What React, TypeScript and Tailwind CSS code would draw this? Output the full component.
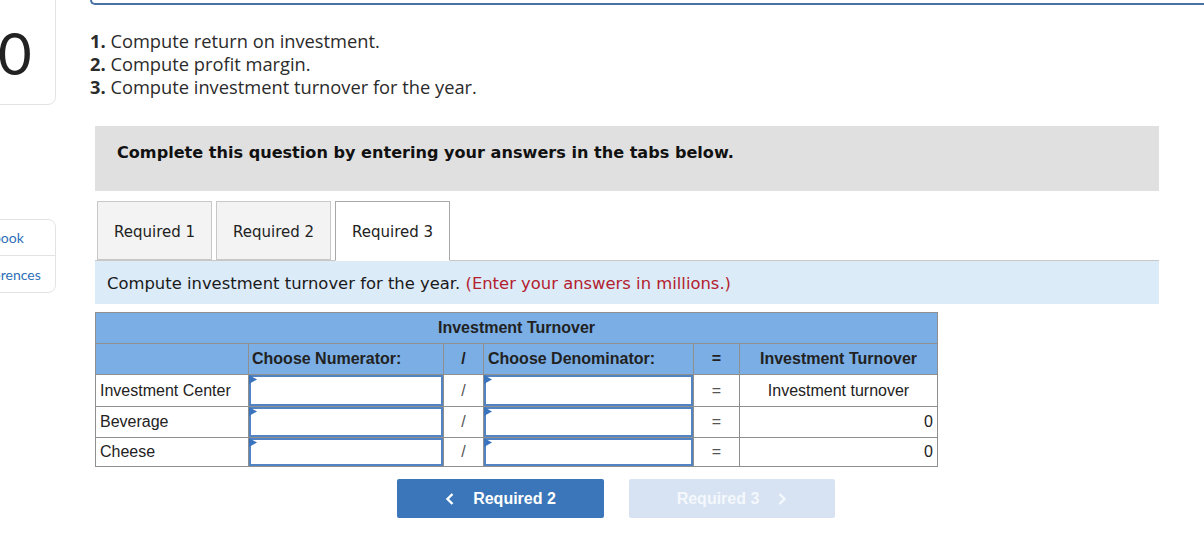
import React from 'react';

type Row = { name: string; result: string; align: 'center' | 'right' };

const rows: Row[] = [
  { name: 'Investment Center', result: 'Investment turnover', align: 'center' },
  { name: 'Beverage', result: '0', align: 'right' },
  { name: 'Cheese', result: '0', align: 'right' },
];

// dropdown-style answer box with the little blue marker in its corner
const AnswerBox = () => (
  <div className="relative h-full w-full border-2 border-[#5283c2] bg-white">
    <svg className="absolute -left-[2px] -top-[2px]" width="8" height="9" viewBox="0 0 8 9" aria-hidden="true">
      <polygon points="0,0 8,4.5 0,9" fill="#3a74bf" />
    </svg>
  </div>
);

const Tab = ({ label, active }: { label: string; active?: boolean }) => (
  <div
    className={`flex h-[59px] w-[115px] items-center justify-center border pt-[3px] text-[15px] ${
      active
        ? 'relative z-10 -mb-px h-[60px] border-[#a8a8a8] border-b-white bg-white'
        : 'border-[#c8c8c8] bg-[#f3f3f3]'
    }`}
  >
    {label}
  </div>
);

export default function App() {
  const cell = 'border border-[#8f8f8f]';

  return (
    <div className="flex h-[542px] w-[1204px] overflow-hidden bg-white font-['Liberation_Sans',Arial,sans-serif] text-[#222]">
      {/* left sidebar, clipped by the window edge */}
      <div className="w-[56px] shrink-0 overflow-hidden">
        <div className="-ml-[30px] -mt-[20px] h-[125px] w-[86px] rounded-br-lg border border-[#e3e3e3] font-['Lato',sans-serif] text-[58px] leading-none text-[#222]">
          <div className="pl-[27px] pt-[43px]">0</div>
        </div>
        <div className="mt-[114px] -ml-[30px] w-[86px] rounded-r-lg border border-[#e3e3e3] font-['Lato',sans-serif] text-[14px] text-[#2f6fb8]">
          <div className="flex h-[36px] items-center border-b border-[#e3e3e3] pl-[14px]">Ebook</div>
          <div className="flex h-[36px] items-center pl-[2px]">References</div>
        </div>
      </div>

      {/* main column */}
      <div className="ml-[34px] flex min-w-0 flex-1 flex-col">
        <div className="h-[5px] w-[1200px] shrink-0 rounded-bl-lg border-b-2 border-l-2 border-[#4b72a6]" />

        <ol className="mt-[24px] font-['Open_Sans',sans-serif] text-[18.3px] leading-[23px] text-[#2b2b2b]">
          <li><b>1.</b> Compute return on investment.</li>
          <li><b>2.</b> Compute profit margin.</li>
          <li><b>3.</b> Compute investment turnover for the year.</li>
        </ol>

        <div className="ml-[5px] w-[1064px] font-['DejaVu_Sans',Verdana,sans-serif]">
          <div className="mt-[28px] h-[65px] bg-[#e0e0e0] pl-[22px] pt-[17px] text-[16.1px] font-bold leading-[20px] text-[#111]">
            Complete this question by entering your answers in the tabs below.
          </div>

          <div className="mt-[10px] flex gap-[4px] border-b border-[#c8c8c8] pl-[2px]">
            <Tab label="Required 1" />
            <Tab label="Required 2" />
            <Tab label="Required 3" active />
          </div>

          <div className="flex h-[43px] items-center bg-[#dcebf8] pl-[12px] pt-[3px] text-[16.4px] text-[#1a1a1a]">
            Compute investment turnover for the year.&nbsp;
            <span className="text-[#b3212e]">(Enter your answers in millions.)</span>
          </div>

          <table className="mt-[8px] w-[842px] table-fixed border-collapse font-['Liberation_Sans',Arial,sans-serif] text-[16px] text-[#222]">
            <colgroup>
              <col className="w-[153px]" />
              <col className="w-[195px]" />
              <col className="w-[40px]" />
              <col className="w-[210px]" />
              <col className="w-[46px]" />
              <col className="w-[198px]" />
            </colgroup>
            <thead className="bg-[#7aaee5] font-bold">
              <tr className="h-[31px]">
                <th colSpan={6} className={`${cell} text-center`}>Investment Turnover</th>
              </tr>
              <tr className="h-[31px]">
                <th className={cell} />
                <th className={`${cell} px-[3px] text-left`}>Choose Numerator:</th>
                <th className={`${cell} text-center`}>/</th>
                <th className={`${cell} px-[4px] text-left`}>Choose Denominator:</th>
                <th className={`${cell} text-center`}>=</th>
                <th className={`${cell} text-center`}>Investment Turnover</th>
              </tr>
            </thead>
            <tbody>
              {rows.map((row, i) => (
                <tr key={row.name} className={i === 0 ? 'h-[32px]' : i === 1 ? 'h-[31px]' : 'h-[29px]'}>
                  <td className={`${cell} px-[4px]`}>{row.name}</td>
                  <td className={`${cell} p-0`}>
                    <div className={i === 0 ? 'h-[31px]' : i === 1 ? 'h-[30px]' : 'h-[28px]'}><AnswerBox /></div>
                  </td>
                  <td className={`${cell} text-center text-[#555]`}>/</td>
                  <td className={`${cell} p-0`}>
                    <div className={i === 0 ? 'h-[31px]' : i === 1 ? 'h-[30px]' : 'h-[28px]'}><AnswerBox /></div>
                  </td>
                  <td className={`${cell} text-center text-[#555]`}>=</td>
                  <td className={`${cell} px-[4px] ${row.align === 'center' ? 'text-center' : 'text-right'}`}>
                    {row.result}
                  </td>
                </tr>
              ))}
            </tbody>
          </table>

          <div className="mt-[12px] flex gap-[25px] pl-[302px] font-['Liberation_Sans',Arial,sans-serif] text-[16px] font-bold">
            <button className="flex h-[39px] w-[207px] items-center justify-center gap-[18px] rounded-[2px] bg-[#3a76b9] text-white">
              <svg width="10" height="14" viewBox="0 0 10 14" aria-hidden="true">
                <path d="M7.5 2 L2.5 7 L7.5 12" fill="none" stroke="currentColor" strokeWidth="2.4" />
              </svg>
              Required 2
            </button>
            <button className="flex h-[39px] w-[206px] items-center justify-center gap-[18px] rounded-[2px] bg-[#d7e3f2] text-[#f4f8fc]">
              Required 3
              <svg width="10" height="14" viewBox="0 0 10 14" aria-hidden="true">
                <path d="M2.5 2 L7.5 7 L2.5 12" fill="none" stroke="currentColor" strokeWidth="2.4" />
              </svg>
            </button>
          </div>
        </div>
      </div>
    </div>
  );
}
